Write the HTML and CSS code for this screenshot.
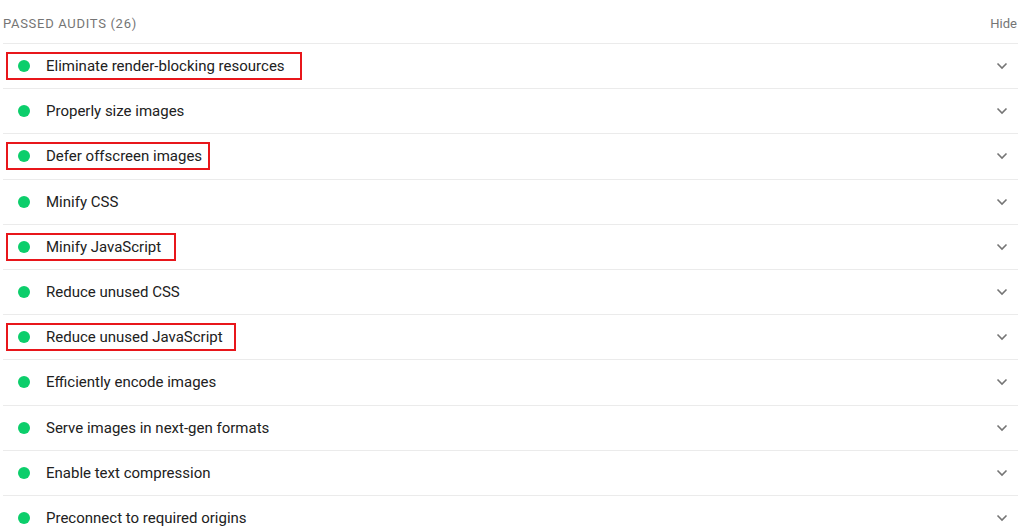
FILE: index.html
```html
<!DOCTYPE html>
<html lang="en">
<head>
<meta charset="utf-8">
<title>Passed audits</title>
<link rel="stylesheet" href="styles.css">
</head>
<body>
<div class="group">
  <div class="group-header">
    <span class="group-title">Passed audits (26)</span>
    <span class="group-toggle">Hide</span>
  </div>
  <div class="audit">
    <span class="label hl hl-a"><span class="dot"></span><span class="title">Eliminate render-blocking resources</span></span>
    <svg class="chev" viewBox="0 0 12 8"><path d="M1.5 1.5 L6 6 L10.5 1.5"/></svg>
  </div>
  <div class="audit">
    <span class="label"><span class="dot"></span><span class="title">Properly size images</span></span>
    <svg class="chev" viewBox="0 0 12 8"><path d="M1.5 1.5 L6 6 L10.5 1.5"/></svg>
  </div>
  <div class="audit">
    <span class="label hl hl-b"><span class="dot"></span><span class="title">Defer offscreen images</span></span>
    <svg class="chev" viewBox="0 0 12 8"><path d="M1.5 1.5 L6 6 L10.5 1.5"/></svg>
  </div>
  <div class="audit">
    <span class="label"><span class="dot"></span><span class="title">Minify CSS</span></span>
    <svg class="chev" viewBox="0 0 12 8"><path d="M1.5 1.5 L6 6 L10.5 1.5"/></svg>
  </div>
  <div class="audit">
    <span class="label hl hl-c"><span class="dot"></span><span class="title">Minify JavaScript</span></span>
    <svg class="chev" viewBox="0 0 12 8"><path d="M1.5 1.5 L6 6 L10.5 1.5"/></svg>
  </div>
  <div class="audit">
    <span class="label"><span class="dot"></span><span class="title">Reduce unused CSS</span></span>
    <svg class="chev" viewBox="0 0 12 8"><path d="M1.5 1.5 L6 6 L10.5 1.5"/></svg>
  </div>
  <div class="audit">
    <span class="label hl hl-d"><span class="dot"></span><span class="title">Reduce unused JavaScript</span></span>
    <svg class="chev" viewBox="0 0 12 8"><path d="M1.5 1.5 L6 6 L10.5 1.5"/></svg>
  </div>
  <div class="audit">
    <span class="label"><span class="dot"></span><span class="title">Efficiently encode images</span></span>
    <svg class="chev" viewBox="0 0 12 8"><path d="M1.5 1.5 L6 6 L10.5 1.5"/></svg>
  </div>
  <div class="audit">
    <span class="label"><span class="dot"></span><span class="title">Serve images in next-gen formats</span></span>
    <svg class="chev" viewBox="0 0 12 8"><path d="M1.5 1.5 L6 6 L10.5 1.5"/></svg>
  </div>
  <div class="audit">
    <span class="label"><span class="dot"></span><span class="title">Enable text compression</span></span>
    <svg class="chev" viewBox="0 0 12 8"><path d="M1.5 1.5 L6 6 L10.5 1.5"/></svg>
  </div>
  <div class="audit">
    <span class="label"><span class="dot"></span><span class="title">Preconnect to required origins</span></span>
    <svg class="chev" viewBox="0 0 12 8"><path d="M1.5 1.5 L6 6 L10.5 1.5"/></svg>
  </div>
</div>
</body>
</html>
```

FILE: styles.css
```css
html, body {
  margin: 0;
  padding: 0;
  background: #ffffff;
  overflow: hidden;
}

body {
  font-family: Roboto, "Liberation Sans", sans-serif;
  color: #212121;
}

.group {
  width: 1015px;
  margin-left: 3px;
}

.group-header {
  height: 44px;
  display: flex;
  align-items: center;
  justify-content: space-between;
  border-bottom: 1px solid #ebebeb;
  box-sizing: border-box;
}

.group-title {
  text-transform: uppercase;
  font-size: 13px;
  letter-spacing: 0.7px;
  color: #757575;
  padding-top: 3px;
}

.group-toggle {
  font-size: 13px;
  color: #757575;
  margin-right: 1px;
  padding-top: 3px;
}

.audit {
  height: 45.2px;
  display: flex;
  align-items: center;
  justify-content: space-between;
  border-bottom: 1px solid #ebebeb;
  box-sizing: border-box;
}

.label {
  display: flex;
  align-items: center;
  height: 28px;
  box-sizing: border-box;
  padding-left: 10px;
  border: 2px solid transparent;
  margin-left: 3px;
}

.hl {
  border-color: #e8161b;
}

.hl-a { width: 296px; }
.hl-b { width: 204px; }
.hl-c { width: 170px; }
.hl-d { width: 230px; }

.dot {
  width: 12px;
  height: 12px;
  border-radius: 50%;
  background: #0cce6b;
  flex: none;
}

.title {
  font-size: 15px;
  margin-left: 16px;
  white-space: nowrap;
  color: #212121;
}

.chev {
  width: 12px;
  height: 8px;
  margin-right: 10px;
  fill: none;
  stroke: #757575;
  stroke-width: 1.6;
}
```
